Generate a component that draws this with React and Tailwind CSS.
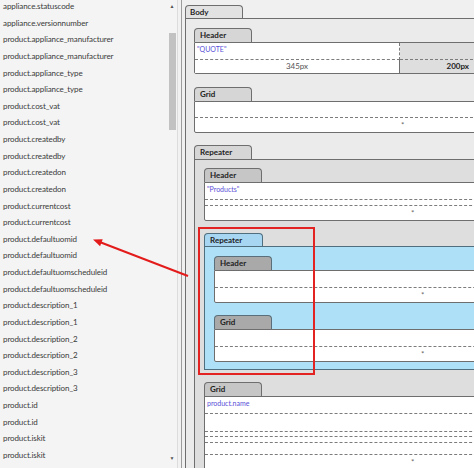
import React from 'react';

const fields = [
  'appliance.statuscode',
  'appliance.versionnumber',
  'product.appliance_manufacturer',
  'product.appliance_manufacturer',
  'product.appliance_type',
  'product.appliance_type',
  'product.cost_vat',
  'product.cost_vat',
  'product.createdby',
  'product.createdby',
  'product.createdon',
  'product.createdon',
  'product.currentcost',
  'product.currentcost',
  'product.defaultuomid',
  'product.defaultuomid',
  'product.defaultuomscheduleid',
  'product.defaultuomscheduleid',
  'product.description_1',
  'product.description_1',
  'product.description_2',
  'product.description_2',
  'product.description_3',
  'product.description_3',
  'product.id',
  'product.id',
  'product.iskit',
  'product.iskit',
];

const Tab = ({ label, className }) => (
  <div className={`w-[58px] h-[14px] rounded-t-[4px] border border-b-0 pl-[5px] text-[8px] font-bold leading-[13px] text-[#1e1e1e] ${className}`}>
    {label}
  </div>
);

const Dash = ({ className = '' }) => (
  <div className={`border-b border-dashed border-[#7c7c7c] ${className}`} />
);

const Star = () => (
  <div className="h-[14px] pl-[206px] text-[8px] leading-[14px] text-[#666]">*</div>
);

const SimpleBand = ({ label, tabClass, text }) => (
  <div>
    <Tab label={label} className={tabClass} />
    <div className="border border-[#6e6e6e] rounded-b-[2px] bg-white">
      <div className="h-[17px] border-b border-dashed border-[#7c7c7c] pl-[2px] text-[7px] leading-[12px] text-[#5a4fd8]">{text}</div>
      <Star />
    </div>
  </div>
);

export default function App() {
  return (
    <div className="relative flex h-[468px] w-[474px] overflow-hidden bg-[#f0f0f0] font-['Lato','Noto_Sans',sans-serif]">
      {/* field list */}
      <div className="flex w-[178px] shrink-0 border-r border-[#dcdcdc] bg-[#f4f4f4]">
        <div className="flex-1 -mt-[2px] pl-[3px]">
          {fields.map((f, i) => (
            <div key={i} className="h-[16.63px] text-[8px] tracking-[-0.1px] leading-[16.63px] text-[#3a3a3a] whitespace-nowrap">{f}</div>
          ))}
        </div>
        <div className="flex w-[10px] flex-col items-center">
          <div className="h-[12px] text-[5px] leading-[12px] text-[#555]">▲</div>
          <div className="mt-[21px] h-[97px] w-[7px] bg-[#c2c2c2]" />
          <div className="flex-1" />
          <div className="h-[16px] text-[5px] leading-[12px] text-[#555]">▼</div>
        </div>
      </div>
      <div className="w-[3px] shrink-0 bg-[#f2f2f2]" />

      {/* designer */}
      <div className="min-w-0 flex-1 overflow-hidden border-l border-[#9c9c9c] bg-[#f0f0f0] pl-[3px] pt-[5px]">
        <div className="w-[320px]">
          <div className="w-[58px] h-[13px] rounded-t-[4px] border border-b-0 border-[#6e6e6e] bg-[#e2e2e2] pl-[4px] text-[8px] font-bold leading-[12px] text-[#1e1e1e]">Body</div>
          <div className="h-[460px] border border-[#6e6e6e] bg-[#ebebeb] pl-[8px] pt-[9px]">
            {/* Header */}
            <Tab label="Header" className="border-[#6e6e6e] bg-[#d6d6d6]" />
            <div className="flex border border-[#6e6e6e] rounded-b-[2px]">
              <div className="w-[205px] bg-white">
                <div className="h-[17px] border-b border-r border-dashed border-[#7c7c7c] pl-[2px] text-[7px] leading-[12px] text-[#5a4fd8]">"QUOTE"</div>
                <div className="h-[13px] border-r border-[#6e6e6e] text-center text-[8px] leading-[12px] text-[#555]">345px</div>
              </div>
              <div className="flex-1 bg-[#dedede]">
                <Dash className="h-[17px]" />
                <div className="h-[13px] w-[69px] text-right text-[8px] font-bold leading-[12px] text-[#222]">200px</div>
              </div>
            </div>

            {/* Grid */}
            <div className="mt-[13px]">
              <Tab label="Grid" className="border-[#6e6e6e] bg-[#d6d6d6]" />
              <div className="border border-[#6e6e6e] rounded-b-[2px] bg-white">
                <Dash className="h-[16px]" />
                <Star />
              </div>
            </div>

            {/* Repeater */}
            <div className="mt-[12px]">
              <Tab label="Repeater" className="border-[#6e6e6e] bg-[#d6d6d6]" />
              <div className="h-[320px] border border-[#6e6e6e] bg-[#dedede] pl-[9px] pt-[8px]">
                <Tab label="Header" className="border-[#6e6e6e] bg-[#c6c6c6]" />
                <div className="border border-[#6e6e6e] rounded-b-[2px] bg-white">
                  <div className="h-[17px] border-b border-dashed border-[#7c7c7c] pl-[2px] text-[7px] leading-[12px] text-[#5a4fd8]">"Products"</div>
                  <Dash className="h-[6px]" />
                  <Star />
                </div>

                {/* nested repeater */}
                <div className="relative mt-[12px]">
                  <div className="pointer-events-none absolute -left-[6px] -top-[6px] z-10 h-[148px] w-[117px] border-2 border-[#e32222]" />
                  <div className="w-[59px] h-[13px] rounded-t-[4px] border border-b-0 border-[#4f6e7e] bg-[#a6d6f2] pl-[5px] text-[8px] font-bold leading-[12px] text-[#1e1e1e]">Repeater</div>
                  <div className="border border-[#4f6e7e] bg-[#aee0f7] pl-[9px] pt-[9px] pb-[7px]">
                    <SimpleBand label="Header" tabClass="border-[#5b6f7a] bg-[#a9a9a9]" text="" />
                    <div className="mt-[12px]">
                      <SimpleBand label="Grid" tabClass="border-[#5b6f7a] bg-[#a9a9a9]" text="" />
                    </div>
                  </div>
                </div>

                {/* grid */}
                <div className="mt-[12px]">
                  <Tab label="Grid" className="border-[#6e6e6e] bg-[#c6c6c6]" />
                  <div className="border border-[#6e6e6e] bg-white">
                    <div className="h-[17px] border-b border-dashed border-[#7c7c7c] pl-[2px] text-[7px] leading-[12px] text-[#5a4fd8]">product.name</div>
                    <Dash className="h-[18px]" />
                    <Dash className="h-[5px]" />
                    <Dash className="h-[6px]" />
                    <Dash className="h-[12px]" />
                    <Star />
                  </div>
                </div>
              </div>
            </div>
          </div>
        </div>
      </div>

      {/* annotation arrow */}
      <svg className="pointer-events-none absolute left-0 top-0" width="474" height="468">
        <line x1="188" y1="276" x2="99" y2="241.8" stroke="#e31b1b" strokeWidth="2" />
        <polygon points="93,239.5 102.7,239.3 100.1,246.3" fill="#e31b1b" />
      </svg>
    </div>
  );
}
